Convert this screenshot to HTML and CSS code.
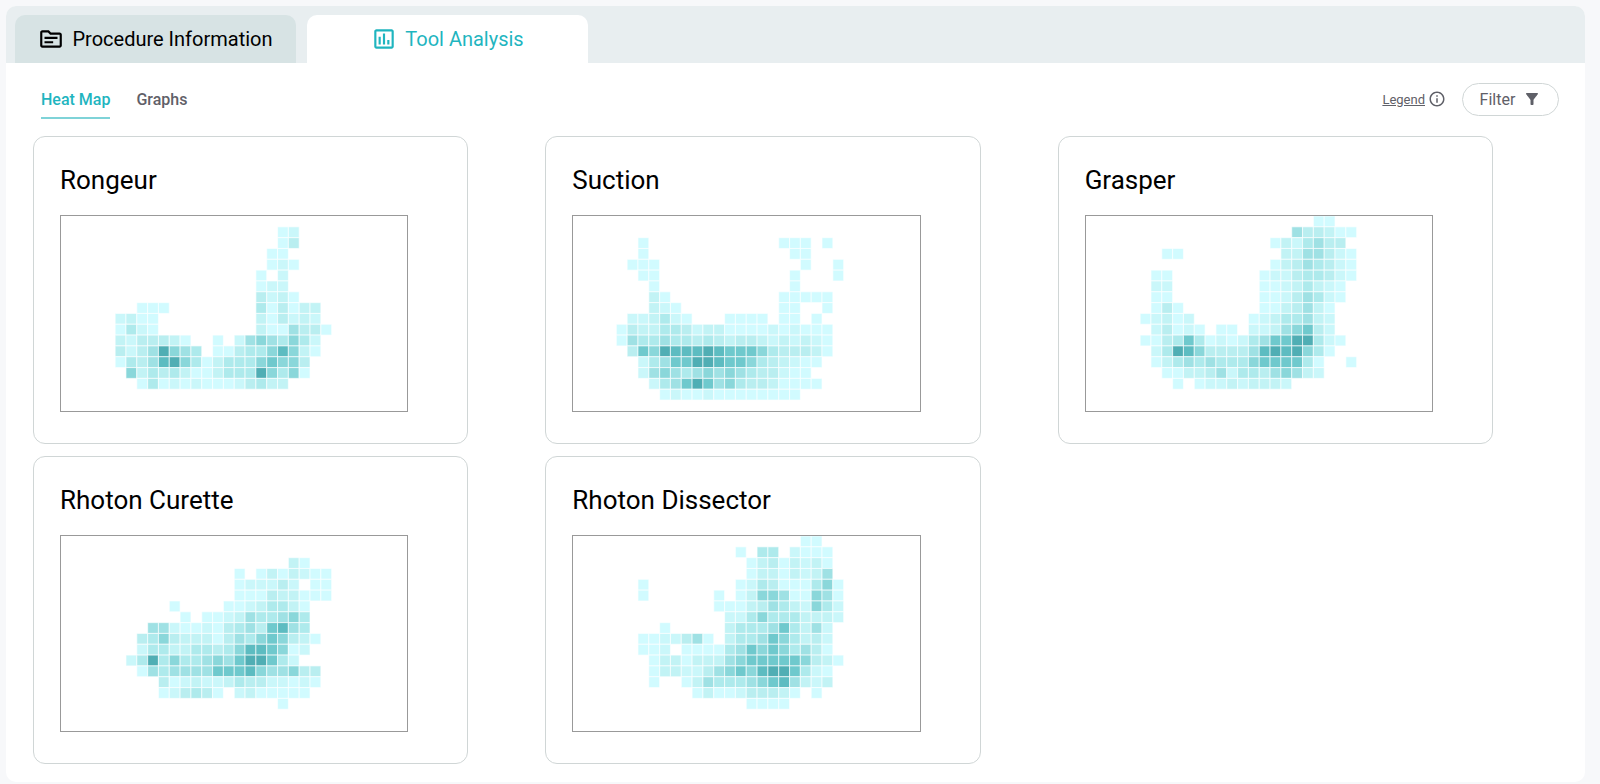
FILE: index.html
```
<!DOCTYPE html>
<html lang="en">
<head>
  <meta charset="UTF-8" />
  <meta name="viewport" content="width=device-width, initial-scale=1" />
  <title>Tool Analysis</title>

  <link rel="stylesheet" href="styles.css">
</head>
<body>
  <main class="panel">
    <nav class="tabs" aria-label="Sections">
      <button class="tab" type="button">
        <svg class="tab-icon" viewBox="0 0 24 24" aria-hidden="true"><path d="M20 6h-8l-2-2H4c-1.1 0-1.99.9-1.99 2L2 18c0 1.1.9 2 2 2h16c1.1 0 2-.9 2-2V8c0-1.1-.9-2-2-2zm0 12H4V6h5.17l2 2H20v10zm-2-6H6v-2h12v2zm-4 4H6v-2h8v2z"/></svg>
        Procedure Information
      </button>
      <button class="tab active" type="button">
        <svg class="tab-icon" viewBox="0 0 24 24" aria-hidden="true"><path d="M9 17H7v-7h2v7zm4 0h-2V7h2v10zm4 0h-2v-4h2v4zm2 2H5V5h14v14zm0-16H5c-1.1 0-2 .9-2 2v14c0 1.1.9 2 2 2h14c1.1 0 2-.9 2-2V5c0-1.1-.9-2-2-2z"/></svg>
        Tool Analysis
      </button>
    </nav>

    <div class="toolbar">
      <div class="views">
        <button class="view active" type="button">Heat Map</button>
        <button class="view" type="button">Graphs</button>
      </div>
      <div class="actions">
        <a class="legend" href="#legend">
          <span class="legend-text">Legend</span>
          <svg class="legend-icon" viewBox="0 0 24 24" aria-hidden="true"><path d="M11 7h2v2h-2V7zm0 4h2v6h-2v-6zm1-9C6.48 2 2 6.48 2 12s4.48 10 10 10 10-4.48 10-10S17.52 2 12 2zm0 18c-4.41 0-8-3.59-8-8s3.59-8 8-8 8 3.59 8 8-3.59 8-8 8z"/></svg>
        </a>
        <button class="filter" type="button">
          Filter
          <svg class="filter-icon" viewBox="0 0 24 24" aria-hidden="true"><path d="M4.25 5.61C6.27 8.2 10 13 10 13v6c0 .55.45 1 1 1h2c.55 0 1-.45 1-1v-6s3.72-4.8 5.74-7.39C20.25 4.95 19.78 4 18.95 4H5.04c-.83 0-1.3.95-.79 1.61z"/></svg>
        </button>
      </div>
    </div>

    <div class="cards">
      <section class="card">
        <h2>Rongeur</h2>
        <svg class="map" data-tool="rongeur" viewBox="0 0 32 18" role="img" aria-label="Rongeur heat map"></svg>
      </section>
      <section class="card">
        <h2>Suction</h2>
        <svg class="map" data-tool="suction" viewBox="0 0 32 18" role="img" aria-label="Suction heat map"></svg>
      </section>
      <section class="card">
        <h2>Grasper</h2>
        <svg class="map" data-tool="grasper" viewBox="0 0 32 18" role="img" aria-label="Grasper heat map"></svg>
      </section>
      <section class="card">
        <h2>Rhoton Curette</h2>
        <svg class="map" data-tool="curette" viewBox="0 0 32 18" role="img" aria-label="Rhoton Curette heat map"></svg>
      </section>
      <section class="card">
        <h2>Rhoton Dissector</h2>
        <svg class="map" data-tool="dissector" viewBox="0 0 32 18" role="img" aria-label="Rhoton Dissector heat map"></svg>
      </section>
    </div>
  </main>

  <script src="heatmap.js"></script>
</body>
</html>
```
FILE: styles.css
```
* {
  box-sizing: border-box;
}
body {
  margin: 0;
  padding: 6px 15px 3px 6px;
  font-family: Roboto, "Liberation Sans", sans-serif;
  background: #f7f8fa;
  color: #000;
}
button {
  font-family: inherit;
  border: 0;
  background: none;
  cursor: pointer;
}
svg {
  fill: currentColor;
}
.panel {
  background: #fff;
  border-radius: 10px;
  overflow: hidden;
  padding-bottom: 18px;
}

/* Main tabs */
.tabs {
  display: flex;
  gap: 11px;
  padding: 9px 9px 0;
  background: #e8eef0;
}
.tab {
  display: flex;
  align-items: center;
  justify-content: center;
  gap: 8px;
  width: 281px;
  height: 48px;
  padding: 0;
  border-radius: 10px 10px 0 0;
  background: #d7e3e4;
  color: #000;
  font-size: 20px;
}
.tab.active {
  background: #fff;
  color: #1fb5bf;
}
.tab-icon {
  width: 26px;
  height: 26px;
}

/* Toolbar */
.toolbar {
  display: flex;
  justify-content: space-between;
  align-items: center;
  padding: 18px 26px 17px 35px;
}
.views {
  display: flex;
  gap: 26px;
}
.view {
  padding: 9px 0 8px;
  border-bottom: 2px solid transparent;
  color: #5f6068;
  font-size: 16px;
  line-height: 19px;
  font-weight: 500;
}
.view.active {
  color: #1fb5bf;
  border-color: #7fd3d8;
}
.actions {
  display: flex;
  align-items: center;
  gap: 16px;
  padding-bottom: 2px;
  color: #5f6068;
}
.legend {
  display: flex;
  align-items: center;
  gap: 3px;
  color: inherit;
  font-size: 13px;
  text-decoration: none;
}
.legend-text {
  text-decoration: underline;
}
.legend-icon {
  width: 18px;
  height: 18px;
}
.filter {
  display: flex;
  align-items: center;
  justify-content: center;
  gap: 8px;
  width: 97px;
  height: 33px;
  padding: 0;
  border: 1px solid #d0d6d6;
  border-radius: 17px;
  color: inherit;
  font-size: 16px;
}
.filter-icon {
  width: 18px;
  height: 18px;
}

/* Heat maps */
.cards {
  display: grid;
  grid-template-columns: repeat(3, 1fr);
  row-gap: 12px;
  padding: 0 15px 0 27px;
}
.card {
  width: 85%;
  padding: 26px 26px 31px;
  border: 1px solid #d0d6d6;
  border-radius: 12px;
}
.card h2 {
  margin: 0 0 18px;
  font-size: 26px;
  line-height: 34px;
  font-weight: 400;
}
.map {
  display: block;
  width: calc(100% - 33px);
  border: 1px solid #999;
}
.map rect {
  stroke: #fff;
  stroke-opacity: 0.6;
  stroke-width: 0.1;
}
.h1 { fill: #d1fbff; }
.h2 { fill: #caf7fa; }
.h3 { fill: #c2f3f5; }
.h4 { fill: #b9eef0; }
.h5 { fill: #aeeaec; }
.h6 { fill: #9fe1e4; }
.h7 { fill: #8ad7da; }
.h8 { fill: #6fc9cd; }
.h9 { fill: #5dbcc1; }
.ha { fill: #50aeb4; }
```
FILE: heatmap.js
```
// One string per grid row, one character per cell:
// "." is empty, 1-9 and a go from lightest to darkest
const maps = {
  rongeur: [
    '',
    '....................12',
    '....................14',
    '...................11',
    '...................121',
    '..................1.2',
    '..................122',
    '..................4231',
    '.......111........514133',
    '.....2311.........314232',
    '.....1521.........3116441',
    '.....3244431..1.26765752',
    '.....4246a765.1145579731',
    '.....15469a751355578774',
    '......735453113555a7571',
    '.......15121211124533'
  ],
  suction: [
    '',
    '',
    '......1............111.1',
    '......1.............11',
    '.....111.............1..1',
    '......11............1...1',
    '.......1............1',
    '.......31..........11111',
    '.......321.........11..1',
    '.....223521...1111.11.1',
    '....14335542331111212111',
    '....16556554543443232321',
    '.....487a999a98887544431',
    '......25688aa9887543211',
    '......2676567676544211',
    '.......2568a86754431111',
    '........1211211111111'
  ],
  grasper: [
    '.....................11',
    '...................644311',
    '.................1325644',
    '.......11.........3366421',
    '.................13465421',
    '......11........122455421',
    '......22........11235321',
    '......11........11246521',
    '......141.......1134631',
    '.....12312.....12355632',
    '......24121.11.22367842',
    '.....11458512125688aa521',
    '......25a97444469a9a751',
    '......1356565557888851..1',
    '.......113346255467632',
    '........1.122323332'
  ],
  curette: [
    '',
    '',
    '.....................31',
    '................1.1313211',
    '................122242.11',
    '................111433111',
    '..........1....11235531',
    '...........1.1123655675',
    '........662112145648965',
    '.......45743331465787431',
    '.......2553355457998712',
    '......25a57556768aa852',
    '.......16566668889766744',
    '.........412322354422121',
    '.........124541.2311111',
    '....................1'
  ],
  dissector: [
    '.....................11',
    '...............1.55.2111',
    '................13413231',
    '................13313236',
    '......1........1254111571',
    '......1......1.1377611761',
    '.............111346532752',
    '..............22575553332',
    '........1.....3555685362',
    '......1122461.3556875342',
    '......112.11115687875641',
    '.......133133367888887431',
    '.......13322467879aa8521',
    '.......1..13655567896323',
    '...........1311244431.1',
    '................1111'
  ]
};

const SVG_NS = 'http://www.w3.org/2000/svg';

document.querySelectorAll('.map').forEach(svg => {
  maps[svg.dataset.tool].forEach((row, y) => {
    [...row].forEach((level, x) => {
      if (level === '.') return;
      const cell = document.createElementNS(SVG_NS, 'rect');
      cell.setAttribute('x', x);
      cell.setAttribute('y', y);
      cell.setAttribute('width', 1);
      cell.setAttribute('height', 1);
      cell.setAttribute('class', 'h' + level);
      svg.appendChild(cell);
    });
  });
});
```
